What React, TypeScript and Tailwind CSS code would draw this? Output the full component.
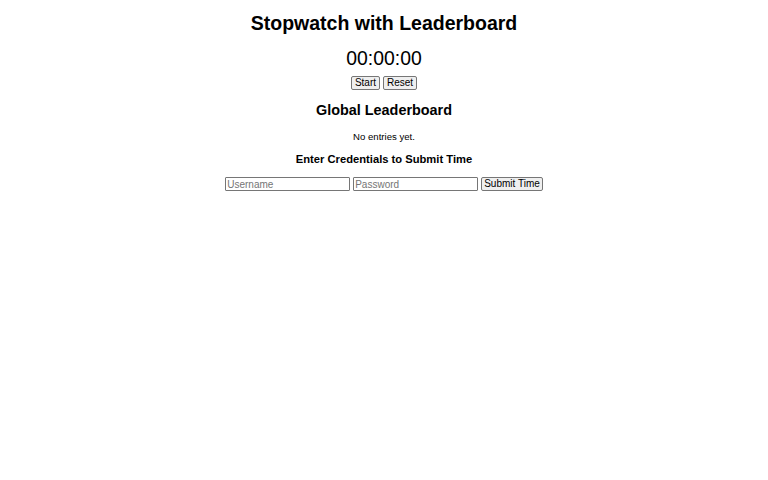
import React, { useEffect, useRef, useState } from 'react';

type Entry = { username: string; time: number };

const formatTime = (ms: number) => {
  const total = Math.floor(ms / 10);
  const cs = total % 100;
  const s = Math.floor(total / 100) % 60;
  const m = Math.floor(total / 6000);
  return [m, s, cs].map((n) => String(n).padStart(2, '0')).join(':');
};

const btn =
  'h-[14px] px-[3px] text-[10px] leading-none text-black bg-[#efefef] border border-[#767676] rounded-[2px] hover:bg-[#e5e5e5]';

const field =
  'w-[125px] h-[14px] px-[1px] text-[10px] leading-none text-black border border-[#767676] rounded-[1px] placeholder:text-[#757575] outline-none';

export default function App() {
  const [elapsed, setElapsed] = useState(0);
  const [running, setRunning] = useState(false);
  const [entries, setEntries] = useState<Entry[]>([]);
  const [username, setUsername] = useState('');
  const [password, setPassword] = useState('');
  const startRef = useRef(0);

  useEffect(() => {
    if (!running) return;
    startRef.current = Date.now() - elapsed;
    const id = setInterval(() => setElapsed(Date.now() - startRef.current), 10);
    return () => clearInterval(id);
  }, [running]);

  const reset = () => {
    setRunning(false);
    setElapsed(0);
  };

  const submit = () => {
    if (!username || !password || elapsed === 0) return;
    setEntries((e) => [...e, { username, time: elapsed }].sort((a, b) => a.time - b.time));
    setPassword('');
  };

  return (
    <div className="min-h-screen bg-white text-black font-['Liberation_Sans',Arial,sans-serif] flex flex-col items-center">
      <h1 className="mt-[12px] text-[19.5px] leading-[22px] font-bold">Stopwatch with Leaderboard</h1>

      <div className="mt-[13px] text-[19.4px] leading-[22px]">{formatTime(elapsed)}</div>

      <div className="mt-[7px] flex gap-[3px]">
        <button className={btn} onClick={() => setRunning((r) => !r)}>
          {running ? 'Stop' : 'Start'}
        </button>
        <button className={btn} onClick={reset}>
          Reset
        </button>
      </div>

      <h2 className="mt-[12px] text-[14.4px] leading-[17px] font-bold">Global Leaderboard</h2>

      {entries.length === 0 ? (
        <p className="mt-[12px] text-[9.6px] leading-[11px]">No entries yet.</p>
      ) : (
        <ol className="mt-[12px] text-[9.6px] leading-[11px]">
          {entries.map((e, i) => (
            <li key={i}>
              {i + 1}. {e.username} - {formatTime(e.time)}
            </li>
          ))}
        </ol>
      )}

      <h3 className="mt-[11px] text-[11.2px] leading-[13px] font-bold">Enter Credentials to Submit Time</h3>

      <div className="mt-[11px] flex gap-[3px]">
        <input
          className={field}
          placeholder="Username"
          value={username}
          onChange={(e) => setUsername(e.target.value)}
        />
        <input
          className={field}
          type="password"
          placeholder="Password"
          value={password}
          onChange={(e) => setPassword(e.target.value)}
        />
        <button className={`${btn} !px-[2px]`} onClick={submit}>
          Submit Time
        </button>
      </div>
    </div>
  );
}
